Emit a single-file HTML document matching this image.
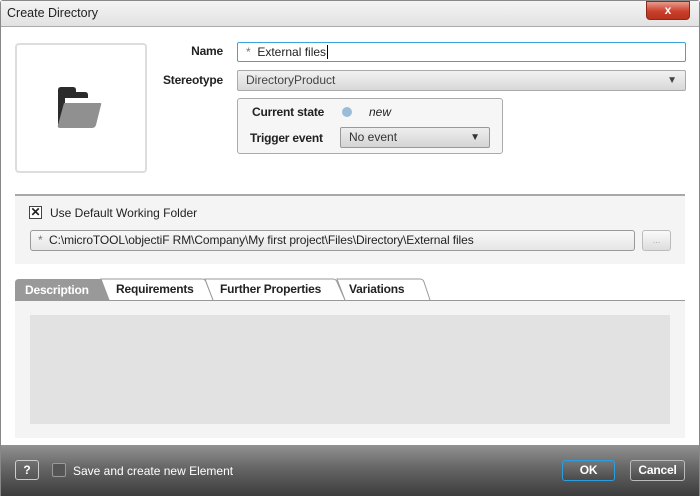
<!DOCTYPE html><html><head><style>
*{box-sizing:border-box;margin:0;padding:0}
body{width:700px;height:496px;position:relative;font-family:"Liberation Sans Narrow","Liberation Sans",sans-serif;font-size:12px;color:#222;background:#fff;overflow:hidden}
.a{position:absolute}
.b{font-weight:bold;letter-spacing:-0.2px}
</style></head><body>
<div class="a" style="left:0;top:0;width:700px;height:496px;border:1px solid #888;border-radius:3px 3px 0 0"></div>
<div class="a" style="left:1px;top:1px;width:698px;height:26px;background:linear-gradient(#f4f4f4,#e2e2e2);border-bottom:1px solid #aaa"></div>
<div class="a" style="left:7px;top:6px;font-size:12.5px">Create Directory</div>
<div class="a" style="left:646px;top:1px;width:44px;height:19px;border-radius:0 0 4px 4px;background:linear-gradient(#e89a8c,#c9402b 55%,#b8321f);border:1px solid #8a2a1c;color:#fff;text-align:center;font-weight:bold;font-size:12px;line-height:16px">x</div>
<div class="a" style="left:15px;top:43px;width:132px;height:130px;border:2px solid #ddd;border-radius:4px"></div>
<svg class="a" style="left:55px;top:86px" width="48" height="44"><path d="M3 4 Q3 1 6 1 H18 Q21 1 21 4 V6 H30 Q33 6 33 9 V12 H10 V40 H3Z" fill="#2b2b2b"/><path d="M10 13 H31 V40 H10Z" fill="#fff"/><path d="M9 17 H45 Q47 17 46 19 L41 39 Q40 42 37 42 H5 Q2 42 3 39Z" fill="#909090"/></svg>
<div class="a b" style="left:150px;width:73px;top:44px;text-align:right">Name</div>
<div class="a" style="left:237px;top:42px;width:449px;height:20px;border:1px solid #3aa6e0;border-radius:2px;line-height:18px;padding-left:8px"><span style="color:#777">*</span>&nbsp;&nbsp;External files<span style="border-left:1px solid #000;margin-left:1px"></span></div>
<div class="a b" style="left:150px;width:73px;top:73px;text-align:right">Stereotype</div>
<div class="a" style="left:237px;top:70px;width:449px;height:21px;border:1px solid #aaa;border-radius:2px;background:linear-gradient(#f2f2f2,#d8d8d8);line-height:19px;padding-left:8px;color:#444">DirectoryProduct<span style="position:absolute;right:8px;font-size:10px">▼</span></div>
<div class="a" style="left:237px;top:98px;width:266px;height:56px;border:1px solid #aaa;border-radius:3px;background:#f6f6f6"></div>
<div class="a b" style="left:252px;top:105px">Current state</div>
<div class="a" style="left:342px;top:107px;width:10px;height:10px;border-radius:50%;background:#9bbcd8"></div>
<div class="a" style="left:369px;top:105px;font-style:italic">new</div>
<div class="a b" style="left:250px;top:131px">Trigger event</div>
<div class="a" style="left:340px;top:127px;width:150px;height:21px;border:1px solid #999;border-radius:2px;background:linear-gradient(#eee,#d4d4d4);line-height:19px;padding-left:8px;color:#333">No event<span style="position:absolute;right:9px;font-size:10px">▼</span></div>
<div class="a" style="left:15px;top:194px;width:670px;height:70px;background:#f4f4f4;border-top:2px solid #a8a8a8"></div>
<div class="a" style="left:29px;top:206px;width:13px;height:13px;border:1px solid #444;background:#fff;font-size:12px;line-height:11px;text-align:center;font-weight:bold">✕</div>
<div class="a" style="left:50px;top:206px">Use Default Working Folder</div>
<div class="a" style="left:30px;top:230px;width:605px;height:21px;border:1px solid #999;border-radius:3px;background:linear-gradient(#f8f8f8,#e6e6e6);line-height:19px;padding-left:7px;font-size:12px;letter-spacing:-0.1px"><span style="color:#777">*</span>&nbsp;&nbsp;C:\microTOOL\objectiF RM\Company\My first project\Files\Directory\External files</div>
<div class="a" style="left:642px;top:230px;width:29px;height:21px;border:1px solid #bbb;border-radius:3px;background:linear-gradient(#fafafa,#ddd);color:#aaa;text-align:center;font-size:9px;line-height:19px">...</div>
<svg class="a" style="left:15px;top:278px" width="670" height="24">
<path d="M0 22 V5 Q0 1 4 1 H86 L94 22Z" fill="#999"/>
<path d="M94 22 L86 1 H187 Q190 1 191 4 L198 22" fill="#fff" stroke="#999"/>
<path d="M198 22 L190 1 H318 Q321 1 322 4 L330 22" fill="#fff" stroke="#999"/>
<path d="M330 22 L322 1 H405 Q408 1 409 4 L415 22" fill="#fff" stroke="#999"/>
<line x1="0" y1="22.5" x2="670" y2="22.5" stroke="#999"/>
</svg>
<div class="a b" style="left:25px;top:283px;color:#fff">Description</div>
<div class="a b" style="left:116px;top:282px">Requirements</div>
<div class="a b" style="left:220px;top:282px">Further Properties</div>
<div class="a b" style="left:349px;top:282px">Variations</div>
<div class="a" style="left:15px;top:301px;width:670px;height:137px;background:#f4f4f4"></div>
<div class="a" style="left:30px;top:315px;width:640px;height:109px;background:#e2e2e2"></div>
<div class="a" style="left:1px;top:445px;width:698px;height:51px;background:linear-gradient(#929292,#6a6a6a 40%,#3c3c3c)"></div>
<div class="a b" style="left:15px;top:460px;width:24px;height:20px;border:1px solid #ccc;border-radius:3px;color:#fff;text-align:center;line-height:18px">?</div>
<div class="a" style="left:52px;top:463px;width:14px;height:14px;border:1px solid #999;border-radius:2px;background:#555"></div>
<div class="a" style="left:73px;top:464px;color:#fff">Save and create new Element</div>
<div class="a b" style="left:562px;top:460px;width:53px;height:21px;border:1px solid #2a9ee0;border-radius:3px;background:linear-gradient(#777,#4a4a4a);color:#fff;text-align:center;line-height:19px">OK</div>
<div class="a b" style="left:630px;top:460px;width:55px;height:21px;border:1px solid #bbb;border-radius:3px;background:linear-gradient(#777,#4a4a4a);color:#fff;text-align:center;line-height:19px">Cancel</div>
</body></html>
